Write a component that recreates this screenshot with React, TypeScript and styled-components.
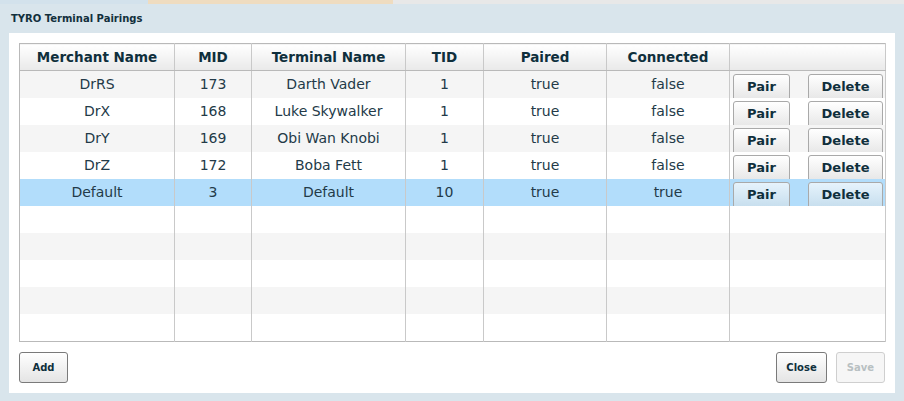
import React, { useState } from 'react';
import styled, { createGlobalStyle } from 'styled-components';

const GlobalStyle = createGlobalStyle`
  html, body {
    margin: 0;
    padding: 0;
    background: #e9e9e9;
    font-family: "DejaVu Sans", Verdana, sans-serif;
  }
`;

const Backdrop = styled.div`
  display: flex;
  height: 4px;
`;

const BackdropPiece = styled.div<{ $color: string; $width?: number }>`
  background: ${(p) => p.$color};
  width: ${(p) => (p.$width ? `${p.$width}px` : 'auto')};
  flex: ${(p) => (p.$width ? 'none' : '1')};
`;

const Dialog = styled.div`
  background: #d9e5ec;
  height: 397px;
  display: flex;
  flex-direction: column;
  box-sizing: border-box;
  padding: 0 9px 8px 9px;
`;

const TitleBar = styled.div`
  height: 29px;
  display: flex;
  align-items: center;
  padding-left: 2px;
  font-size: 10px;
  font-weight: bold;
  color: #12303c;
`;

const Panel = styled.div`
  background: #ffffff;
  flex: 1;
  padding: 10px 10px 10px 10px;
  display: flex;
  flex-direction: column;
`;

const Grid = styled.table`
  border-collapse: collapse;
  table-layout: fixed;
  width: 866px;
  border: 1px solid #b9b9b9;
  font-size: 14px;
  line-height: 17px;
  color: #233a48;
`;

const HeadCell = styled.th`
  height: 26px;
  padding: 0;
  font-size: 13.5px;
  font-weight: bold;
  color: #0f2f3c;
  background: linear-gradient(#ffffff, #e9e9e9);
  border-right: 1px solid #c9c9c9;
  border-bottom: 1px solid #b9b9b9;
  text-align: center;
`;

const Row = styled.tr<{ $tone: 'odd' | 'even' | 'selected' }>`
  height: 27px;
  background: ${(p) =>
    p.$tone === 'selected' ? '#b2ddfb' : p.$tone === 'odd' ? '#f5f5f5' : '#ffffff'};
`;

const Cell = styled.td`
  padding: 0;
  height: 27px;
  text-align: center;
  border-right: 1px solid #c9c9c9;
  white-space: nowrap;
  overflow: hidden;
`;

const ActionWrap = styled.div`
  height: 27px;
  overflow: hidden;
  display: flex;
  justify-content: space-between;
  align-items: flex-start;
  padding: 3px 2px 0 3px;
  box-sizing: border-box;
`;

const RowButton = styled.button<{ $width: number; $selected?: boolean }>`
  width: ${(p) => p.$width}px;
  height: 27px;
  flex: none;
  border: 1px solid #a9a9a9;
  border-radius: 3px;
  background: ${(p) =>
    p.$selected ? 'linear-gradient(#e6f3fc, #c5dded)' : 'linear-gradient(#ffffff, #e6e6e6)'};
  font-family: "DejaVu Sans", Verdana, sans-serif;
  font-size: 13px;
  font-weight: bold;
  color: #0f2f3c;
  padding: 0 0 3px 0;
  cursor: pointer;
`;

const Footer = styled.div`
  display: flex;
  align-items: center;
  gap: 9px;
  margin-top: auto;
`;

const Spacer = styled.div`
  flex: 1;
`;

const FooterButton = styled.button<{ $width: number; $disabled?: boolean }>`
  width: ${(p) => p.$width}px;
  height: 31px;
  border: 1px solid ${(p) => (p.$disabled ? '#cfcfcf' : '#7a7a7a')};
  border-radius: 3px;
  background: ${(p) => (p.$disabled ? '#f6f6f6' : 'linear-gradient(#ffffff, #e4e4e4)')};
  font-family: "DejaVu Sans", Verdana, sans-serif;
  font-size: 10px;
  font-weight: bold;
  color: ${(p) => (p.$disabled ? '#b8c0c2' : '#0f2f3c')};
  padding: 0;
`;

interface Pairing {
  merchant: string;
  mid: number;
  terminal: string;
  tid: number;
  paired: boolean;
  connected: boolean;
}

const pairings: Pairing[] = [
  { merchant: 'DrRS', mid: 173, terminal: 'Darth Vader', tid: 1, paired: true, connected: false },
  { merchant: 'DrX', mid: 168, terminal: 'Luke Skywalker', tid: 1, paired: true, connected: false },
  { merchant: 'DrY', mid: 169, terminal: 'Obi Wan Knobi', tid: 1, paired: true, connected: false },
  { merchant: 'DrZ', mid: 172, terminal: 'Boba Fett', tid: 1, paired: true, connected: false },
  { merchant: 'Default', mid: 3, terminal: 'Default', tid: 10, paired: true, connected: true },
];

const columns = [
  { title: 'Merchant Name', width: 155 },
  { title: 'MID', width: 77 },
  { title: 'Terminal Name', width: 154 },
  { title: 'TID', width: 78 },
  { title: 'Paired', width: 123 },
  { title: 'Connected', width: 123 },
  { title: '', width: 156 },
];

const TOTAL_ROWS = 10;

const App: React.FC = () => {
  const [selected, setSelected] = useState<number>(4);

  const tone = (i: number) => (i === selected ? 'selected' : i % 2 === 0 ? 'odd' : 'even');

  return (
    <>
      <GlobalStyle />
      <Backdrop>
        <BackdropPiece $color="#d3e2ec" $width={148} />
        <BackdropPiece $color="#efdcc0" $width={245} />
        <BackdropPiece $color="#e8e8e8" />
      </Backdrop>
      <Dialog>
        <TitleBar>TYRO Terminal Pairings</TitleBar>
        <Panel>
          <Grid>
            <colgroup>
              {columns.map((c, i) => (
                <col key={i} style={{ width: c.width }} />
              ))}
            </colgroup>
            <thead>
              <tr>
                {columns.map((c, i) => (
                  <HeadCell key={i}>{c.title}</HeadCell>
                ))}
              </tr>
            </thead>
            <tbody>
              {Array.from({ length: TOTAL_ROWS }).map((_, i) => {
                const p = pairings[i];
                if (!p) {
                  return (
                    <Row key={i} $tone={tone(i)}>
                      {columns.map((_c, j) => (
                        <Cell key={j} />
                      ))}
                    </Row>
                  );
                }
                return (
                  <Row key={i} $tone={tone(i)} onClick={() => setSelected(i)}>
                    <Cell>{p.merchant}</Cell>
                    <Cell>{p.mid}</Cell>
                    <Cell>{p.terminal}</Cell>
                    <Cell>{p.tid}</Cell>
                    <Cell>{String(p.paired)}</Cell>
                    <Cell>{String(p.connected)}</Cell>
                    <Cell>
                      <ActionWrap>
                        <RowButton $width={57} $selected={i === selected}>Pair</RowButton>
                        <RowButton $width={75} $selected={i === selected}>Delete</RowButton>
                      </ActionWrap>
                    </Cell>
                  </Row>
                );
              })}
            </tbody>
          </Grid>
          <Footer>
            <FooterButton $width={49}>Add</FooterButton>
            <Spacer />
            <FooterButton $width={51}>Close</FooterButton>
            <FooterButton $width={49} $disabled>Save</FooterButton>
          </Footer>
        </Panel>
      </Dialog>
    </>
  );
};

export default App;
